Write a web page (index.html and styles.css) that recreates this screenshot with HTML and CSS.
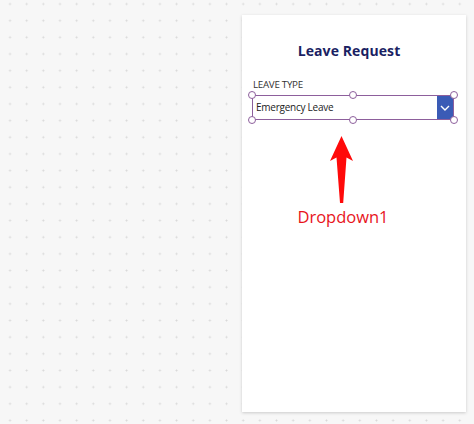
FILE: index.html
```html
<!DOCTYPE html>
<html>
<head>
<meta charset="utf-8">
<link rel="stylesheet" href="styles.css">
</head>
<body>
<div class="canvas">
  <div class="card">
    <h1 class="title">Leave Request</h1>
    <div class="label">LEAVE TYPE</div>
    <div class="dropdown">
      <span class="value">Emergency Leave</span>
      <span class="btn">
        <svg width="10" height="6" viewBox="0 0 10 6"><path d="M1 1 L5 5 L9 1" fill="none" stroke="#fff" stroke-width="1.4"/></svg>
      </span>
      <span class="handle h-tl"></span>
      <span class="handle h-tm"></span>
      <span class="handle h-tr"></span>
      <span class="handle h-bl"></span>
      <span class="handle h-bm"></span>
      <span class="handle h-br"></span>
    </div>
    <div class="annot">
      <svg class="arrow" width="24" height="68" viewBox="0 0 24 68"><path d="M11.5 0 L23 25 L16.5 21.5 L13.2 67 L10 67 L6.5 21.5 L0 25 Z" fill="#ff0a0a"/></svg>
      <div class="annot-text">Dropdown1</div>
    </div>
  </div>
</div>
</body>
</html>
```
FILE: styles.css
```css
html, body {
  margin: 0;
  padding: 0;
}
body {
  width: 474px;
  height: 424px;
  overflow: hidden;
  background-color: #f7f7f7;
  background-image: radial-gradient(circle, #d8d8d8 0.8px, transparent 1.2px);
  background-size: 16.67px 16.67px;
  background-position: 1.7px -4.3px;
  font-family: "Open Sans", "Noto Sans", sans-serif;
}
.canvas {
  padding: 15px 0 0 242px;
}
.card {
  width: 224px;
  height: 397px;
  box-sizing: border-box;
  background: #fff;
  box-shadow: 0 1px 3px rgba(0, 0, 0, 0.18);
  padding: 0 12px 0 10px;
}
.title {
  margin: 0;
  padding: 25px 8px 0 0;
  font-size: 14px;
  line-height: 22px;
  font-weight: 700;
  color: #1b1f63;
  text-align: center;
  letter-spacing: 0.1px;
}
.label {
  margin-top: 16px;
  padding-left: 1px;
  font-size: 9.8px;
  line-height: 13px;
  color: #333;
  letter-spacing: -0.3px;
}
.dropdown {
  position: relative;
  margin-top: 4px;
  height: 25px;
  box-sizing: border-box;
  border: 1.5px solid #8d5f9c;
  display: flex;
  align-items: stretch;
}
.value {
  flex: 1;
  padding-left: 3px;
  font-size: 10px;
  line-height: 22px;
  color: #222;
  letter-spacing: -0.25px;
}
.btn {
  width: 16px;
  background: #3a5bb6;
  display: flex;
  align-items: center;
  justify-content: center;
}
.handle {
  position: absolute;
  width: 8px;
  height: 8px;
  box-sizing: border-box;
  border: 1.3px solid #8d5f9c;
  border-radius: 50%;
  background: #fff;
}
.h-tl { left: -5px; top: -5px; }
.h-tm { left: 96px; top: -5px; }
.h-tr { right: -5px; top: -5px; }
.h-bl { left: -5px; bottom: -5px; }
.h-bm { left: 96px; bottom: -5px; }
.h-br { right: -5px; bottom: -5px; }
.annot {
  width: 182px;
  margin-top: 16px;
  display: flex;
  flex-direction: column;
  align-items: center;
}
.arrow {
  display: block;
  margin-right: 2px;
}
.annot-text {
  margin-top: 2px;
  font-size: 16.5px;
  line-height: 22px;
  color: #e8141c;
}
```
